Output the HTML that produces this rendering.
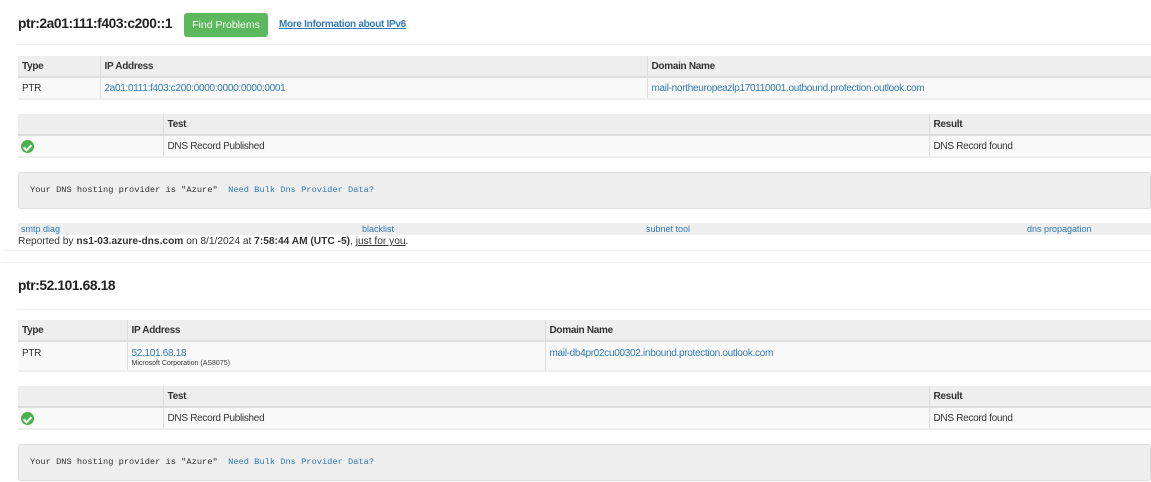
<!DOCTYPE html>
<html><head><meta charset="utf-8"><style>
*{box-sizing:border-box;margin:0;padding:0}
body{width:1151px;height:482px;overflow:hidden;background:#fff;font-family:"Liberation Sans",Arial,sans-serif;font-size:10px;color:#333;position:relative}
.a{position:absolute}
h2{position:absolute;font-size:13.8px;font-weight:bold;color:#222;left:18px;letter-spacing:-0.4px}
.hr{position:absolute;height:1px;background:#eee}
table{position:absolute;left:18px;width:1133px;border-collapse:collapse;font-size:10px;letter-spacing:-0.3px}
td,th{text-align:left;padding:1px 4px 0;vertical-align:middle;border-left:1px solid #ddd}
td:first-child,th:first-child{border-left:none}
th{background:#eee;font-weight:bold;height:21px;border-bottom:2px solid #ddd}
td{background:#f9f9f9;height:22px;border-bottom:2px solid #eee}
a{color:#337ab7;text-decoration:none}
.box{position:absolute;left:18px;width:1133px;background:#eee;border:1px solid #ddd;border-radius:3px;font-family:"Liberation Mono",monospace;font-size:8.7px;padding-left:11px}
.chk{display:inline-block;width:13px;height:13px;border-radius:50%;background:#4cae4c;vertical-align:middle;position:relative;margin-left:-1px}
.chk:after{content:"";position:absolute;left:4px;top:2.5px;width:3px;height:6px;border:solid #fff;border-width:0 2px 2px 0;transform:rotate(45deg)}
</style></head><body>
<h2 style="top:16px">ptr:2a01:111:f403:c200::1</h2>
<div class="a" style="left:184px;top:13px;width:84px;height:24px;background:#5cb85c;border-radius:3px;color:#fff;font-size:10.5px;text-align:center;line-height:24px">Find Problems</div>
<a class="a" style="left:279px;top:19px;font-size:10px;font-weight:bold;text-decoration:underline;letter-spacing:-0.3px">More Information about IPv6</a>
<div class="hr" style="left:18px;top:44px;width:1133px"></div>
<table style="top:56px"><tr><th style="width:82px">Type</th><th style="width:547px">IP Address</th><th>Domain Name</th></tr>
<tr><td>PTR</td><td><a>2a01:0111:f403:c200:0000:0000:0000:0001</a></td><td><a>mail-northeuropeazlp170110001.outbound.protection.outlook.com</a></td></tr></table>
<table style="top:114px"><tr><th style="width:145px"></th><th style="width:766px">Test</th><th>Result</th></tr>
<tr><td><span class="chk"></span></td><td>DNS Record Published</td><td>DNS Record found</td></tr></table>
<div class="box" style="top:172px;height:37px;line-height:35px">Your DNS hosting provider is "Azure"&nbsp; <a>Need Bulk Dns Provider Data?</a></div>
<div class="a" style="left:18px;top:223px;width:1133px;height:12px;background:#eee;font-size:9px;line-height:12px">
<a class="a" style="left:3px">smtp diag</a><a class="a" style="left:344px">blacklist</a><a class="a" style="left:628px">subnet tool</a><a class="a" style="left:1009px">dns propagation</a></div>
<div class="a" style="left:18px;top:236px;font-size:10.2px">Reported by <b>ns1-03.azure-dns.com</b> on 8/1/2024 at <b>7:58:44 AM (UTC -5)</b>, <span style="text-decoration:underline">just for you</span>.</div>
<div class="hr" style="left:3px;top:250px;width:1148px"></div>
<div class="hr" style="left:3px;top:262px;width:1148px"></div>
<h2 style="top:278px">ptr:52.101.68.18</h2>
<div class="hr" style="left:18px;top:309px;width:1133px"></div>
<table style="top:320px"><tr><th style="width:109px">Type</th><th style="width:418px">IP Address</th><th>Domain Name</th></tr>
<tr><td style="height:30px;vertical-align:top;padding-top:6px">PTR</td><td style="vertical-align:top;padding-top:6px"><a>52.101.68.18</a><div style="font-size:7px;margin-top:1px;letter-spacing:0">Microsoft Corporation (AS8075)</div></td><td style="vertical-align:top;padding-top:6px"><a>mail-db4pr02cu00302.inbound.protection.outlook.com</a></td></tr></table>
<table style="top:386px"><tr><th style="width:145px"></th><th style="width:766px">Test</th><th>Result</th></tr>
<tr><td><span class="chk"></span></td><td>DNS Record Published</td><td>DNS Record found</td></tr></table>
<div class="box" style="top:444px;height:37px;line-height:35px">Your DNS hosting provider is "Azure"&nbsp; <a>Need Bulk Dns Provider Data?</a></div>
</body></html>
